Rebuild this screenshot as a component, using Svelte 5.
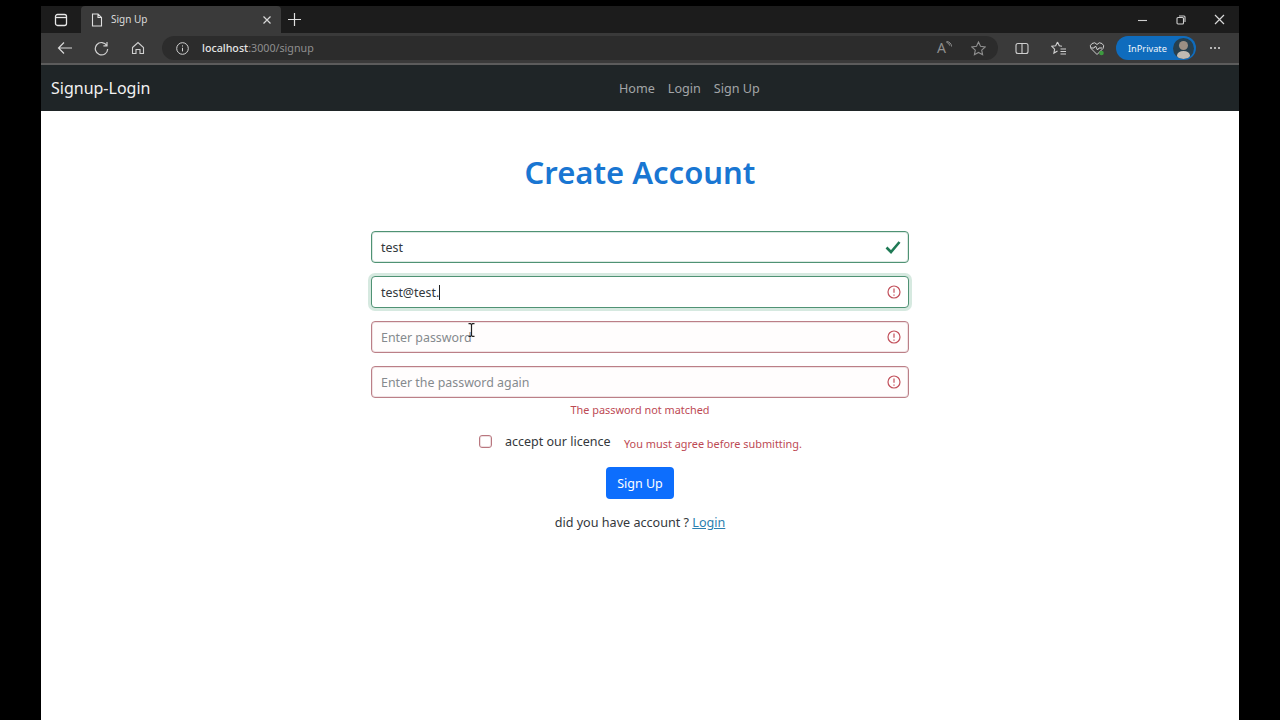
<script>
  const fields = [
    { value: 'test', placeholder: 'Enter username', state: 'ok' },
    { value: 'test@test.', placeholder: 'Enter email', state: 'focus' },
    { value: '', placeholder: 'Enter password', state: 'bad', cursor: true },
    { value: '', placeholder: 'Enter the password again', state: 'bad' }
  ];
</script>

<div class="frame">
  <div class="window">
    <div class="tabbar">
      <div class="tabtoggle">
        <svg width="14" height="14" viewBox="0 0 14 14" fill="none" stroke="#e6e6e6" stroke-width="1.3"><rect x="1.500" y="1.500" width="11" height="11" rx="2"/><path d="M1.500 4.500h11"/></svg>
      </div>
      <div class="tab">
        <svg width="12" height="14" viewBox="0 0 12 14" fill="none" stroke="#e0e0e0" stroke-width="1.1"><path d="M1.500 1h5.500l3.500 3.500V13h-9zM7 1v3.500h3.500"/></svg>
        <span class="tabtitle">Sign Up</span>
        <svg class="tabclose" width="10" height="10" viewBox="0 0 10 10" stroke="#d8d8d8" stroke-width="1.2"><path d="M1.500 1.500l7 7M8.500 1.500l-7 7"/></svg>
      </div>
      <svg class="newtab" width="13" height="13" viewBox="0 0 13 13" stroke="#e0e0e0" stroke-width="1.2"><path d="M6.500 0v13M0 6.500h13"/></svg>
      <div class="winbtns">
        <svg width="10" height="10" viewBox="0 0 10 10" stroke="#cfcfcf" stroke-width="1.1"><path d="M0 5.500h9"/></svg>
        <svg width="10" height="10" viewBox="0 0 10 10" fill="none" stroke="#cfcfcf" stroke-width="1.1"><rect x="1" y="2.500" width="6.500" height="6.500" rx="1"/><path d="M3 1h5a1 1 0 0 1 1 1v5"/></svg>
        <svg width="11" height="11" viewBox="0 0 11 11" stroke="#d8d8d8" stroke-width="1.2"><path d="M1 1l9 9M10 1l-9 9"/></svg>
      </div>
    </div>

    <div class="toolbar">
      <svg class="nav1" width="16" height="14" viewBox="0 0 16 14" fill="none" stroke="#d8d8d8" stroke-width="1.2"><path d="M15 7H1.500M7 1.500L1.500 7 7 12.500"/></svg>
      <svg class="nav2" width="15" height="15" viewBox="0 0 15 15" fill="none" stroke="#d0d0d0" stroke-width="1.2"><path d="M12.800 4.500A6.200 6.200 0 1 0 13.700 8M13 1v3.800H9.400"/></svg>
      <svg class="nav3" width="14" height="14" viewBox="0 0 14 14" fill="none" stroke="#d0d0d0" stroke-width="1.1"><path d="M1.500 6.500L7 1.500l5.500 5V12.500H9V8.500H5v4H1.500z"/></svg>
      <div class="address">
        <svg width="13" height="13" viewBox="0 0 13 13" fill="none" stroke="#d4d4d4" stroke-width="1"><circle cx="6.500" cy="6.500" r="5.800"/><path d="M6.500 5.800v3.600M6.500 3.400v1.100"/></svg>
        <span class="url"><b>localhost</b>:3000/signup</span>
        <div class="addr-right">
          <span class="readaloud">A<svg width="6" height="7" viewBox="0 0 6 7" fill="none" stroke="#8f8f8f" stroke-width="1"><path d="M.5 1.500a3 3 0 0 1 3 3M.5 .5a5 5 0 0 1 5 5"/></svg></span>
          <svg width="15" height="15" viewBox="0 0 15 15" fill="none" stroke="#8f8f8f" stroke-width="1.1"><path d="M7.500 1l2 4.300 4.700.6-3.500 3.200.9 4.700-4.100-2.300-4.100 2.300.9-4.700L.8 5.900l4.700-.6z"/></svg>
        </div>
      </div>
      <div class="tools">
        <svg width="14" height="13" viewBox="0 0 14 13" fill="none" stroke="#d0d0d0" stroke-width="1.1"><rect x="1" y="1.500" width="12" height="10" rx="2"/><path d="M7 1.500v10"/></svg>
        <svg width="16" height="15" viewBox="0 0 16 15" fill="none" stroke="#d0d0d0" stroke-width="1.1"><path d="M6.500 1l1.800 3.800 2.700.4M6.500 1L4.700 4.800.8 5.300l2.800 2.800-.7 4 3.600-2M9.500 8h5.500M9.500 10.500h5.500M9.500 13h5.500"/></svg>
        <svg width="16" height="15" viewBox="0 0 16 15" fill="none" stroke="#d0d0d0" stroke-width="1"><path d="M8 13.500L2 7.500a3.500 3.500 0 0 1 6-4 3.500 3.500 0 0 1 6 4zM2 7h3l1.500-2 2 4 1.500-2h3"/><circle cx="12.500" cy="12" r="2.300" fill="#3d9b3f" stroke="none"/></svg>
      </div>
      <div class="private">
        <span>InPrivate</span>
        <div class="avatar"><i class="head"></i><i class="body"></i></div>
      </div>
      <div class="more"><i></i><i></i><i></i></div>
    </div>

    <nav class="navbar">
      <span class="brand">Signup-Login</span>
      <div class="links">
        <span>Home</span>
        <span>Login</span>
        <span>Sign Up</span>
      </div>
    </nav>

    <main class="page">
      <h1>Create Account</h1>
      <form class="form" onsubmit={(e) => e.preventDefault()}>
        {#each fields as f}
          <div class="field {f.state}">
            <span class="fieldtext" class:placeholder={!f.value}>{f.value || f.placeholder}</span>
            {#if f.state === 'focus'}<i class="caret"></i>{/if}
            {#if f.state === 'ok'}
              <svg class="ficon" width="16" height="14" viewBox="0 0 16 14" fill="none" stroke="#1f7a55" stroke-width="2.600"><path d="M1.500 7.500L6 12 14.500 2"/></svg>
            {:else}
              <svg class="ficon" width="14" height="14" viewBox="0 0 14 14" fill="none" stroke="#c2505b" stroke-width="1.200"><circle cx="7" cy="7" r="6"/><path d="M7 3.500v4.300M7 9.500v1.200"/></svg>
            {/if}
            {#if f.cursor}
              <svg class="ibeam" width="7" height="14" viewBox="0 0 7 14" fill="none" stroke="#222" stroke-width="1.200"><path d="M.5.600h2l1 1 1-1h2M3.500 1.600v10.800M.5 13.400h2l1-1 1 1h2"/></svg>
            {/if}
          </div>
        {/each}
        <p class="mismatch">The password not matched</p>
        <div class="licence">
          <i class="check"></i>
          <span class="licencetext">accept our licence</span>
          <span class="agree">You must agree before submitting.</span>
        </div>
        <button class="submit" type="submit">Sign Up</button>
        <p class="have">did you have account ? <a href="#login">Login</a></p>
      </form>
    </main>
  </div>
</div>

<style>
  :global(body) { margin: 0; background: #000; }
  .frame { height: 720px; padding: 6px 41px 0; box-sizing: border-box; background: #000; overflow: hidden; font-family: "Noto Sans", "Open Sans", sans-serif; }
  .window { height: 714px; width: 1198px; display: flex; flex-direction: column; background: #fff; }

  .tabbar { height: 27px; flex: none; background: #1c1c1c; display: flex; align-items: stretch; }
  .tabtoggle { width: 40px; display: flex; align-items: center; justify-content: center; }
  .tab { width: 200px; background: #3a3a3a; display: flex; align-items: center; padding: 0 9px 0 10px; box-sizing: border-box; border-radius: 4px 4px 0 0; }
  .tabtitle { margin-left: 8px; font-size: 10px; line-height: 12px; padding-bottom: 1px; color: #dcdcdc; flex: 1; }
  .newtab { align-self: center; margin-left: 7px; }
  .winbtns { margin-left: auto; display: flex; align-items: center; gap: 28px; padding-right: 14px; }

  .toolbar { height: 30px; flex: none; background: #3a3a3a; border-bottom: 2px solid #5c5c5c; display: flex; align-items: center; }
  .nav1 { margin-left: 16px; }
  .nav2 { margin-left: 21px; }
  .nav3 { margin-left: 22px; }
  .address { margin-left: 17px; width: 836px; height: 24px; border-radius: 12px; background: #2c2c2c; display: flex; align-items: center; padding: 0 12px 0 14px; box-sizing: border-box; }
  .url { margin-left: 13px; font-size: 10.700px; color: #8f8f8f; }
  .url b { font-weight: 500; color: #e4e4e4; }
  .addr-right { margin-left: auto; display: flex; align-items: center; gap: 19px; }
  .readaloud { font-size: 14px; color: #8f8f8f; line-height: 1; display: flex; align-items: flex-start; }
  .tools { margin-left: 17px; display: flex; align-items: center; gap: 22px; }
  .private { margin-left: 11px; width: 80px; height: 24px; border-radius: 12px; background: #0f6cbd; display: flex; align-items: center; justify-content: space-between; padding: 0 2px 0 12px; box-sizing: border-box; }
  .private span { font-size: 9.200px; color: #f0f6fb; }
  .avatar { width: 21px; height: 21px; border-radius: 50%; background: #27404f; position: relative; overflow: hidden; }
  .head { position: absolute; left: 6px; top: 3px; width: 9px; height: 9px; border-radius: 50%; background: #9b8f83; }
  .body { position: absolute; left: 4px; top: 13px; width: 13px; height: 9px; border-radius: 50%; background: #c0bab2; }
  .more { margin-left: 14px; display: flex; gap: 2px; }
  .more i { width: 2px; height: 2px; border-radius: 50%; background: #e0e0e0; }

  .navbar { height: 46px; flex: none; background: #1f2527; display: flex; align-items: center; padding-left: 10px; }
  .brand { width: 568px; font-size: 16px; color: #f2f2f2; }
  .links { display: flex; gap: 13px; font-size: 12.600px; color: #a3a5a7; }

  .page { flex: 1; display: flex; flex-direction: column; align-items: center; padding-top: 40px; }
  h1 { margin: 0; height: 44px; line-height: 42px; font-size: 31px; font-weight: 600; color: #1976d2; }
  .form { margin-top: 36px; width: 538px; display: flex; flex-direction: column; align-items: center; }
  .field { width: 100%; height: 32px; box-sizing: border-box; border: 1px solid; border-radius: 4px; display: flex; align-items: center; padding: 0 7px 0 9px; margin-bottom: 13px; font-size: 12.400px; color: #33383c; position: relative; background: #fff; }
  .ok { border-color: #4f9274; box-shadow: inset 0 0 0 1px rgba(79, 146, 116, 0.2); }
  .focus { border-color: #4f9274; box-shadow: 0 0 0 3px rgba(25, 135, 84, 0.18); }
  .bad { border-color: #bb7f87; background: #fffdfd; box-shadow: inset 0 0 0 1px rgba(187, 127, 135, 0.2); }
  .placeholder { color: #858a8e; }
  .caret { width: 1px; height: 15px; background: #222; }
  .ficon { margin-left: auto; }
  .ibeam { position: absolute; left: 96px; top: 1px; }
  .mismatch { margin: -10px 0 0; height: 18px; line-height: 18px; font-size: 10.900px; color: #bd4a54; }
  .licence { margin-top: 10px; align-self: flex-start; margin-left: 108px; display: flex; align-items: center; height: 24px; }
  .check { width: 11px; height: 11px; border: 1px solid #b9777f; border-radius: 3px; box-shadow: inset 0 0 0 1px rgba(187, 127, 135, 0.25); }
  .licencetext { margin-left: 13px; font-size: 12.500px; color: #33383c; }
  .agree { margin-left: 13.500px; font-size: 10.900px; color: #bd4a54; position: relative; top: 2px; }
  .submit { margin-top: 14px; width: 68px; height: 32px; border: 0; border-radius: 4px; background: #0d6efd; color: #fff; font: inherit; font-size: 12.500px; padding: 0; }
  .have { margin: 14px 0 0; font-size: 12.600px; line-height: 20px; color: #33383c; }
  .have a { color: #2b7fb0; }
</style>
